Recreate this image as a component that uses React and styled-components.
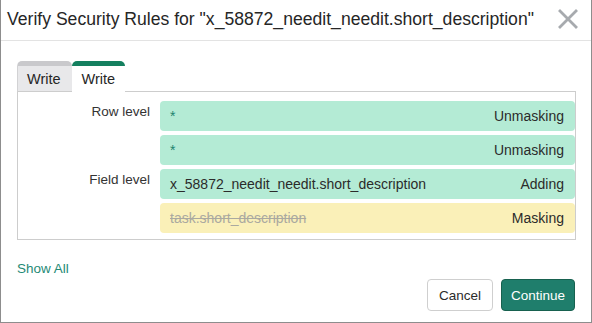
import React from "react";
import styled, { createGlobalStyle } from "styled-components";

const GlobalStyle = createGlobalStyle`
  html, body { margin: 0; padding: 0; background: #ffffff; }
  body { font-family: "Liberation Sans", Arial, Helvetica, sans-serif; color: #2b2b2b; }
  * { box-sizing: border-box; }
`;

const Dialog = styled.div`
  width: 592px;
  height: 323px;
  border: 1px solid #8d8d8d;
  border-top: none;
  display: flex;
  flex-direction: column;
  background: #fff;
`;

const Header = styled.div`
  height: 41px;
  border-bottom: 1px solid #e3e3e3;
  display: flex;
  align-items: center;
  justify-content: space-between;
  padding: 0 13px 2px 6px;
`;

const Title = styled.h1`
  margin: 0;
  font-size: 17.6px;
  font-weight: 400;
  color: #262626;
  white-space: nowrap;
`;

const CloseButton = styled.button`
  border: none;
  background: none;
  padding: 0;
  width: 20px;
  height: 20px;
  display: flex;
  align-items: center;
  justify-content: center;
  cursor: pointer;
`;

const Body = styled.div`
  padding: 20px 15px 0 16px;
  display: flex;
  flex-direction: column;
`;

const TabBar = styled.div`
  display: flex;
  height: 31px;
`;

const Tab = styled.div`
  height: 31px;
  display: flex;
  align-items: center;
  font-size: 14.5px;
  color: #262626;
  border-radius: 5px 5px 0 0;
  border-top: 5px solid ${(p) => (p.$active ? "#14805f" : "#c9c9cc")};
  background: ${(p) => (p.$active ? "#ffffff" : "#e8e8ea")};
  border-left: ${(p) => (p.$active ? "none" : "1px solid #d2d2d4")};
  border-bottom: 1px solid ${(p) => (p.$active ? "#ffffff" : "#cdcdcd")};
  padding-left: ${(p) => (p.$active ? "10px" : "9px")};
  padding-right: ${(p) => (p.$active ? "10px" : "11px")};
`;

const TabFiller = styled.div`
  flex: 1;
  border-bottom: 1px solid #cdcdcd;
`;

const Panel = styled.div`
  border: 1px solid #cdcdcd;
  border-top: none;
  padding: 9px 0 6px 0;
  display: flex;
  flex-direction: column;
  gap: 4px;
`;

const Group = styled.div`
  display: grid;
  grid-template-columns: 132px 1fr;
  column-gap: 10px;
`;

const Label = styled.div`
  text-align: right;
  font-size: 13.5px;
  line-height: 16px;
  padding-top: 3px;
  color: #333;
`;

const Rows = styled.div`
  display: flex;
  flex-direction: column;
  gap: 4px;
`;

const Row = styled.div`
  height: 30px;
  border-radius: 4px;
  display: flex;
  align-items: center;
  justify-content: space-between;
  padding: 0 11px 0 10px;
  font-size: 14px;
  color: #2b2b2b;
  background: ${(p) => (p.$variant === "mask" ? "#faf0b8" : "#b4ebd5")};
`;

const Field = styled.span`
  color: ${(p) => (p.$wild ? "#1c846e" : p.$struck ? "#aaa9a0" : "#2b2b2b")};
  text-decoration: ${(p) => (p.$struck ? "line-through" : "none")};
`;

const Action = styled.span`
  color: #2b2b2b;
`;

const ShowAll = styled.a`
  margin-top: 21px;
  font-size: 13.5px;
  line-height: 15px;
  color: #1f8a76;
  text-decoration: none;
  align-self: flex-start;
  cursor: pointer;
`;

const Footer = styled.div`
  display: flex;
  justify-content: flex-end;
  gap: 8px;
  padding: 3px 16px 0 0;
`;

const Button = styled.button`
  height: 32px;
  padding: 0 ${(p) => (p.$primary ? "9px" : "11px")};
  border-radius: 4px;
  font-family: "Liberation Sans", Arial, sans-serif;
  font-size: 13.5px;
  cursor: pointer;
  background: ${(p) => (p.$primary ? "#1f7e6c" : "#ffffff")};
  color: ${(p) => (p.$primary ? "#ffffff" : "#2b2b2b")};
  border: 1px solid ${(p) => (p.$primary ? "#17614f" : "#cfcfcf")};
`;

const groups = [
  {
    label: "Row level",
    rows: [
      { field: "*", action: "Unmasking", wild: true },
      { field: "*", action: "Unmasking", wild: true },
    ],
  },
  {
    label: "Field level",
    rows: [
      { field: "x_58872_needit_needit.short_description", action: "Adding" },
      { field: "task.short_description", action: "Masking", struck: true, variant: "mask" },
    ],
  },
];

export default function App() {
  return (
    <>
      <GlobalStyle />
      <Dialog>
        <Header>
          <Title>Verify Security Rules for "x_58872_needit_needit.short_description"</Title>
          <CloseButton aria-label="Close">
            <svg width="20" height="20" viewBox="0 0 20 20">
              <path d="M2 2 L18 18 M18 2 L2 18" stroke="#a7aaae" strokeWidth="2.8" strokeLinecap="square" />
            </svg>
          </CloseButton>
        </Header>
        <Body>
          <TabBar>
            <Tab>Write</Tab>
            <Tab $active>Write</Tab>
            <TabFiller />
          </TabBar>
          <Panel>
            {groups.map((g) => (
              <Group key={g.label}>
                <Label>{g.label}</Label>
                <Rows>
                  {g.rows.map((r, i) => (
                    <Row key={i} $variant={r.variant}>
                      <Field $wild={r.wild} $struck={r.struck}>{r.field}</Field>
                      <Action>{r.action}</Action>
                    </Row>
                  ))}
                </Rows>
              </Group>
            ))}
          </Panel>
          <ShowAll>Show All</ShowAll>
        </Body>
        <Footer>
          <Button>Cancel</Button>
          <Button $primary>Continue</Button>
        </Footer>
      </Dialog>
    </>
  );
}
